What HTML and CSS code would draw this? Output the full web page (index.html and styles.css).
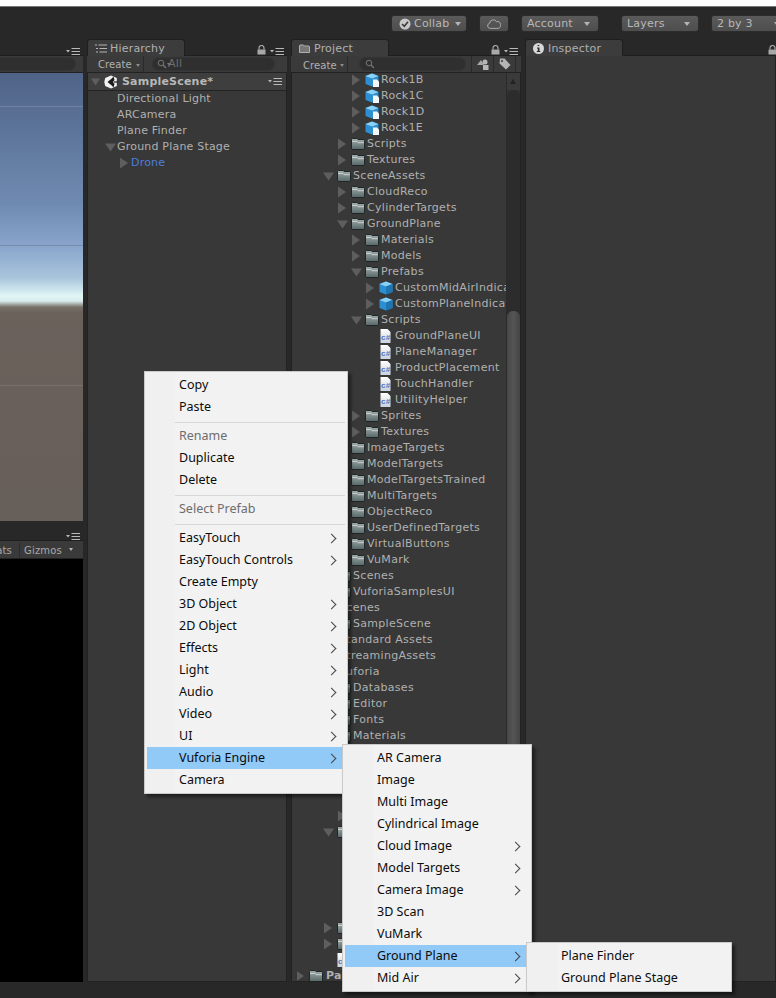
FILE: index.html
```html
<!DOCTYPE html>
<html lang="en">
<head>
    <meta charset="UTF-8">
    <meta name="viewport" content="width=device-width, initial-scale=1.0">
    <title>Unity - SampleScene</title>
    <link rel="stylesheet" href="styles.css">
</head>
<body>
    <svg class="defs" width="0" height="0">
        <defs>
            <linearGradient id="folderFill" x1="0" y1="0" x2="0" y2="1">
                <stop offset="0" stop-color="#a4aeae"/>
                <stop offset="1" stop-color="#566767"/>
            </linearGradient>
            <linearGradient id="docFill" x1="0" y1="0" x2="0" y2="1">
                <stop offset="0" stop-color="#ffffff"/>
                <stop offset="1" stop-color="#c9d3dc"/>
            </linearGradient>
            <symbol id="arrow-right" viewBox="0 0 8 12"><path d="M0 0.5 8 6 0 11.5z" fill="#5e5e5e"/></symbol>
            <symbol id="arrow-down" viewBox="0 0 11 9"><path d="M0 0.5H11L5.5 8.5z" fill="#5e5e5e"/></symbol>
            <symbol id="folder" viewBox="0 0 14 12">
                <path d="M0.5 3V1.5L1.5 0.5H6L7 1.5H13L13.5 2.5V11L13 11.5H1L0.5 11z" fill="url(#folderFill)" stroke="#1f2626"/>
                <path d="M1 3.500H6L7 4.700H13" fill="none" stroke="#c8d0d0"/>
            </symbol>
            <symbol id="cube" viewBox="0 0 14 14">
                <path d="M7 0.5 13.5 3V11L7 13.5 0.5 11V3z" fill="#2b8fd0"/>
                <path d="M7 0.5 13.5 3 7 5.5 0.5 3z" fill="#8ad2f5"/>
                <path d="M7 5.5 13.5 3V11L7 13.5z" fill="#1f74b3"/>
            </symbol>
            <symbol id="model" viewBox="0 0 14 14">
                <path d="M7 0.5 13.5 3V11L7 13.5 0.5 11V3z" fill="#2b8fd0"/>
                <path d="M7 0.5 13.5 3 7 5.5 0.5 3z" fill="#8ad2f5"/>
                <path d="M8 6.5H12L14 8.5V14H8z" fill="#f4f6f8"/>
            </symbol>
            <symbol id="script" viewBox="0 0 11 14">
                <path d="M0.5 0H7.5L10.5 3V14H0.5z" fill="url(#docFill)"/>
                <text x="1" y="10.5" font-family="Liberation Sans, sans-serif" font-size="8" font-weight="700" fill="#4a76c4">c#</text>
            </symbol>
            <symbol id="lock" viewBox="0 0 9 10">
                <path d="M2 4.500V3A2.500 2.500 0 0 1 7 3V4.500" fill="none" stroke="#a8a8a8" stroke-width="1.200"/>
                <rect x="0.5" y="4.500" width="8" height="5" fill="#a8a8a8"/>
            </symbol>
            <symbol id="panel-menu" viewBox="0 0 14 7">
                <path d="M0 2H4L2 4.500z" fill="#b8b8b8"/>
                <path d="M5.500 0.500H14M5.500 3.500H14M5.500 6.500H14" stroke="#b8b8b8"/>
            </symbol>
            <symbol id="mag" viewBox="0 0 10 10">
                <circle cx="4" cy="4" r="2.800" fill="none" stroke="#777"/>
                <path d="M6 6 9 9" stroke="#777" stroke-width="1.300"/>
            </symbol>
        </defs>
    </svg>

    <div class="page-strip"></div>

    <div class="toolbar">
        <div class="tool-btn collab">
            <svg width="12" height="12" viewBox="0 0 12 12"><circle cx="6" cy="6" r="5.500" fill="#c8c8c8"/><path d="M3 6 5.300 8.300 9 3.800" fill="none" stroke="#3a3a3a" stroke-width="1.600"/></svg>
            <span>Collab</span><i class="caret"></i>
        </div>
        <div class="tool-btn cloud">
            <svg width="14" height="10" viewBox="0 0 16 11"><path d="M3.500 10.500A3 3 0 0 1 3 4.600 4.200 4.200 0 0 1 10.800 2.800 3.900 3.900 0 0 1 12.500 10.500z" fill="none" stroke="#b8b8b8"/></svg>
        </div>
        <div class="tool-btn wide account"><span>Account</span><i class="caret"></i></div>
        <div class="tool-btn wide layers"><span>Layers</span><i class="caret"></i></div>
        <div class="tool-btn wide layout"><span>2 by 3</span><i class="caret"></i></div>
    </div>

    <div class="panels">
        <!-- scene + game -->
        <div class="panel-col scene-col">
            <div class="tab-strip">
                <svg class="strip-menu" width="14" height="7"><use href="#panel-menu"/></svg>
            </div>
            <div class="panel-bar"><div class="search scene-search"></div></div>
            <div class="viewport"></div>
            <div class="tab-strip game-strip">
                <svg class="strip-menu" width="14" height="7"><use href="#panel-menu"/></svg>
            </div>
            <div class="game-bar">
                <span class="game-stats">Stats</span>
                <span class="game-gizmos">Gizmos</span>
                <i class="caret"></i>
            </div>
            <div class="game-view"></div>
        </div>

        <!-- hierarchy -->
        <div class="panel-col hierarchy-col">
            <div class="tab-strip">
                <div class="tab">
                    <svg width="12" height="9" viewBox="0 0 12 9"><path d="M0 1H2M3.500 1H12M1 4.500H3M4.500 4.500H12M1 8H3M4.500 8H12" stroke="#b4b4b4"/></svg>
                    <span>Hierarchy</span>
                </div>
                <svg class="strip-lock" width="9" height="10"><use href="#lock"/></svg>
                <svg class="strip-menu" width="14" height="7"><use href="#panel-menu"/></svg>
            </div>
            <div class="panel-bar">
                <div class="create-btn"><span>Create</span><i class="caret"></i></div>
                <div class="search hierarchy-search">
                    <svg width="10" height="10"><use href="#mag"/></svg><i class="caret dim"></i>
                    <span>All</span>
                </div>
            </div>
            <div class="panel-body">
                <div class="scene-head">
                    <svg class="arrow" width="9" height="8" viewBox="0 0 11 9" preserveAspectRatio="none"><use href="#arrow-down"/></svg>
                    <svg class="unity-logo" width="14" height="14" viewBox="0 0 14 14">
                        <path d="M7 0.500 12.800 3V11L7 13.500 1.200 11 0.300 7 1.200 3z" fill="#f2f2f2"/>
                        <path d="M3.500 7 8 3.200 9.500 1.500 10.500 5 9 7 10.500 9 9.500 12.500 8 10.800z" fill="#1c1c1c"/>
                        <path d="M10 6.400H13.800V7.600H10z" fill="#1c1c1c"/>
                    </svg>
                    <span>SampleScene*</span>
                    <svg class="head-menu" width="14" height="7"><use href="#panel-menu"/></svg>
                </div>
                <div class="row h1"><span>Directional Light</span></div>
                <div class="row h1"><span>ARCamera</span></div>
                <div class="row h1"><span>Plane Finder</span></div>
                <div class="row h0">
                    <svg class="arrow" width="11" height="9"><use href="#arrow-down"/></svg>
                    <span>Ground Plane Stage</span>
                </div>
                <div class="row h2 prefab">
                    <svg class="arrow" width="8" height="12"><use href="#arrow-right"/></svg>
                    <span>Drone</span>
                </div>
            </div>
        </div>

        <!-- project -->
        <div class="panel-col project-col">
            <div class="tab-strip">
                <div class="tab">
                    <svg class="tab-ico" width="11" height="9" viewBox="0 0 11 9"><path d="M0.500 8.500V1.500L1 1H4.500L5.500 2H10L10.500 2.500V8.500z" fill="#777" stroke="#b0b0b0"/></svg>
                    <span>Project</span>
                </div>
                <svg class="strip-lock" width="9" height="10"><use href="#lock"/></svg>
                <svg class="strip-menu" width="14" height="7"><use href="#panel-menu"/></svg>
            </div>
            <div class="panel-bar">
                <div class="create-btn"><span>Create</span><i class="caret"></i></div>
                <div class="search project-search">
                    <svg width="10" height="10"><use href="#mag"/></svg>
                </div>
                <div class="filter-btn">
                    <svg width="12" height="11" viewBox="0 0 12 11"><path d="M4 1 7 6H0z" fill="#a8a8a8"/><circle cx="8" cy="3" r="2.500" fill="#b8b8b8"/><rect x="6" y="6" width="5.500" height="5" fill="#b8b8b8"/></svg>
                </div>
                <div class="filter-btn">
                    <svg width="12" height="12" viewBox="0 0 12 12"><path d="M1 0.500H5.500L11.500 7 7 11.500 0.500 5.500z" fill="#b4b4b4"/><circle cx="3" cy="3" r="1" fill="#3a3a3a"/></svg>
                </div>
            </div>
            <div class="project-body">
                <div class="tree">
                    <div class="row lv4"><svg class="arrow" width="8" height="12"><use href="#arrow-right"/></svg><svg class="ico" width="14" height="14"><use href="#model"/></svg><span>Rock1B</span></div>
                    <div class="row lv4"><svg class="arrow" width="8" height="12"><use href="#arrow-right"/></svg><svg class="ico" width="14" height="14"><use href="#model"/></svg><span>Rock1C</span></div>
                    <div class="row lv4"><svg class="arrow" width="8" height="12"><use href="#arrow-right"/></svg><svg class="ico" width="14" height="14"><use href="#model"/></svg><span>Rock1D</span></div>
                    <div class="row lv4"><svg class="arrow" width="8" height="12"><use href="#arrow-right"/></svg><svg class="ico" width="14" height="14"><use href="#model"/></svg><span>Rock1E</span></div>
                    <div class="row lv3"><svg class="arrow" width="8" height="12"><use href="#arrow-right"/></svg><svg class="ico" width="14" height="12"><use href="#folder"/></svg><span>Scripts</span></div>
                    <div class="row lv3"><svg class="arrow" width="8" height="12"><use href="#arrow-right"/></svg><svg class="ico" width="14" height="12"><use href="#folder"/></svg><span>Textures</span></div>
                    <div class="row lv2"><svg class="arrow open" width="11" height="9"><use href="#arrow-down"/></svg><svg class="ico" width="14" height="12"><use href="#folder"/></svg><span>SceneAssets</span></div>
                    <div class="row lv3"><svg class="arrow" width="8" height="12"><use href="#arrow-right"/></svg><svg class="ico" width="14" height="12"><use href="#folder"/></svg><span>CloudReco</span></div>
                    <div class="row lv3"><svg class="arrow" width="8" height="12"><use href="#arrow-right"/></svg><svg class="ico" width="14" height="12"><use href="#folder"/></svg><span>CylinderTargets</span></div>
                    <div class="row lv3"><svg class="arrow open" width="11" height="9"><use href="#arrow-down"/></svg><svg class="ico" width="14" height="12"><use href="#folder"/></svg><span>GroundPlane</span></div>
                    <div class="row lv4"><svg class="arrow" width="8" height="12"><use href="#arrow-right"/></svg><svg class="ico" width="14" height="12"><use href="#folder"/></svg><span>Materials</span></div>
                    <div class="row lv4"><svg class="arrow" width="8" height="12"><use href="#arrow-right"/></svg><svg class="ico" width="14" height="12"><use href="#folder"/></svg><span>Models</span></div>
                    <div class="row lv4"><svg class="arrow open" width="11" height="9"><use href="#arrow-down"/></svg><svg class="ico" width="14" height="12"><use href="#folder"/></svg><span>Prefabs</span></div>
                    <div class="row lv5"><svg class="arrow" width="8" height="12"><use href="#arrow-right"/></svg><svg class="ico" width="14" height="14"><use href="#cube"/></svg><span>CustomMidAirIndicator</span></div>
                    <div class="row lv5"><svg class="arrow" width="8" height="12"><use href="#arrow-right"/></svg><svg class="ico" width="14" height="14"><use href="#cube"/></svg><span>CustomPlaneIndicator</span></div>
                    <div class="row lv4"><svg class="arrow open" width="11" height="9"><use href="#arrow-down"/></svg><svg class="ico" width="14" height="12"><use href="#folder"/></svg><span>Scripts</span></div>
                    <div class="row leaf"><svg class="ico" width="11" height="14"><use href="#script"/></svg><span>GroundPlaneUI</span></div>
                    <div class="row leaf"><svg class="ico" width="11" height="14"><use href="#script"/></svg><span>PlaneManager</span></div>
                    <div class="row leaf"><svg class="ico" width="11" height="14"><use href="#script"/></svg><span>ProductPlacement</span></div>
                    <div class="row leaf"><svg class="ico" width="11" height="14"><use href="#script"/></svg><span>TouchHandler</span></div>
                    <div class="row leaf"><svg class="ico" width="11" height="14"><use href="#script"/></svg><span>UtilityHelper</span></div>
                    <div class="row lv4"><svg class="arrow" width="8" height="12"><use href="#arrow-right"/></svg><svg class="ico" width="14" height="12"><use href="#folder"/></svg><span>Sprites</span></div>
                    <div class="row lv4"><svg class="arrow" width="8" height="12"><use href="#arrow-right"/></svg><svg class="ico" width="14" height="12"><use href="#folder"/></svg><span>Textures</span></div>
                    <div class="row lv3"><svg class="arrow" width="8" height="12"><use href="#arrow-right"/></svg><svg class="ico" width="14" height="12"><use href="#folder"/></svg><span>ImageTargets</span></div>
                    <div class="row lv3"><svg class="arrow" width="8" height="12"><use href="#arrow-right"/></svg><svg class="ico" width="14" height="12"><use href="#folder"/></svg><span>ModelTargets</span></div>
                    <div class="row lv3"><svg class="arrow" width="8" height="12"><use href="#arrow-right"/></svg><svg class="ico" width="14" height="12"><use href="#folder"/></svg><span>ModelTargetsTrained</span></div>
                    <div class="row lv3"><svg class="arrow" width="8" height="12"><use href="#arrow-right"/></svg><svg class="ico" width="14" height="12"><use href="#folder"/></svg><span>MultiTargets</span></div>
                    <div class="row lv3"><svg class="arrow" width="8" height="12"><use href="#arrow-right"/></svg><svg class="ico" width="14" height="12"><use href="#folder"/></svg><span>ObjectReco</span></div>
                    <div class="row lv3"><svg class="arrow" width="8" height="12"><use href="#arrow-right"/></svg><svg class="ico" width="14" height="12"><use href="#folder"/></svg><span>UserDefinedTargets</span></div>
                    <div class="row lv3"><svg class="arrow" width="8" height="12"><use href="#arrow-right"/></svg><svg class="ico" width="14" height="12"><use href="#folder"/></svg><span>VirtualButtons</span></div>
                    <div class="row lv3"><svg class="arrow" width="8" height="12"><use href="#arrow-right"/></svg><svg class="ico" width="14" height="12"><use href="#folder"/></svg><span>VuMark</span></div>
                    <div class="row lv2"><svg class="arrow" width="8" height="12"><use href="#arrow-right"/></svg><svg class="ico" width="14" height="12"><use href="#folder"/></svg><span>Scenes</span></div>
                    <div class="row lv2"><svg class="arrow" width="8" height="12"><use href="#arrow-right"/></svg><svg class="ico" width="14" height="12"><use href="#folder"/></svg><span>VuforiaSamplesUI</span></div>
                    <div class="row lv1"><svg class="arrow open" width="11" height="9"><use href="#arrow-down"/></svg><svg class="ico" width="14" height="12"><use href="#folder"/></svg><span>Scenes</span></div>
                    <div class="row lv2"><svg class="arrow" width="8" height="12"><use href="#arrow-right"/></svg><svg class="ico" width="14" height="12"><use href="#folder"/></svg><span>SampleScene</span></div>
                    <div class="row lv1"><svg class="arrow" width="8" height="12"><use href="#arrow-right"/></svg><svg class="ico" width="14" height="12"><use href="#folder"/></svg><span>Standard Assets</span></div>
                    <div class="row lv1"><svg class="arrow" width="8" height="12"><use href="#arrow-right"/></svg><svg class="ico" width="14" height="12"><use href="#folder"/></svg><span>StreamingAssets</span></div>
                    <div class="row lv1"><svg class="arrow open" width="11" height="9"><use href="#arrow-down"/></svg><svg class="ico" width="14" height="12"><use href="#folder"/></svg><span>Vuforia</span></div>
                    <div class="row lv2"><svg class="arrow" width="8" height="12"><use href="#arrow-right"/></svg><svg class="ico" width="14" height="12"><use href="#folder"/></svg><span>Databases</span></div>
                    <div class="row lv2"><svg class="arrow" width="8" height="12"><use href="#arrow-right"/></svg><svg class="ico" width="14" height="12"><use href="#folder"/></svg><span>Editor</span></div>
                    <div class="row lv2"><svg class="arrow" width="8" height="12"><use href="#arrow-right"/></svg><svg class="ico" width="14" height="12"><use href="#folder"/></svg><span>Fonts</span></div>
                    <div class="row lv2"><svg class="arrow" width="8" height="12"><use href="#arrow-right"/></svg><svg class="ico" width="14" height="12"><use href="#folder"/></svg><span>Materials</span></div>
                    <!-- rows behind the context menus, names not visible -->
                    <div class="row-gap four"></div>
                    <div class="row lv3"><svg class="arrow" width="8" height="12"><use href="#arrow-right"/></svg><svg class="ico" width="14" height="12"><use href="#folder"/></svg></div>
                    <div class="row lv2"><svg class="arrow open" width="11" height="9"><use href="#arrow-down"/></svg><svg class="ico" width="14" height="12"><use href="#folder"/></svg></div>
                    <div class="row-gap five"></div>
                    <div class="row lv2"><svg class="arrow" width="8" height="12"><use href="#arrow-right"/></svg><svg class="ico" width="14" height="12"><use href="#folder"/></svg></div>
                    <div class="row lv2"><svg class="arrow" width="8" height="12"><use href="#arrow-right"/></svg><svg class="ico" width="14" height="12"><use href="#folder"/></svg></div>
                    <div class="row leaf-doc"><svg class="ico" width="11" height="14"><use href="#script"/></svg></div>
                    <div class="row lv0 root"><svg class="arrow" width="8" height="12"><use href="#arrow-right"/></svg><svg class="ico" width="14" height="12"><use href="#folder"/></svg><span>Packages</span></div>
                </div>
                <div class="scrollbar">
                    <div class="scroll-up"></div>
                    <div class="scroll-track"><div class="scroll-thumb"></div></div>
                </div>
            </div>
        </div>

        <!-- inspector -->
        <div class="panel-col inspector-col">
            <div class="tab-strip">
                <div class="tab">
                    <svg class="tab-ico" width="11" height="11" viewBox="0 0 11 11"><circle cx="5.500" cy="5.500" r="5.500" fill="#d8d8d8"/><path d="M4.300 3H6.300V2H4.800zM4 4.500H6.500V8H7.300V9H3.800V8H4.800V5.500H4z" fill="#2b2b2b"/></svg>
                    <span>Inspector</span>
                </div>
                <svg class="strip-lock" width="9" height="10"><use href="#lock"/></svg>
            </div>
            <div class="panel-body"></div>
        </div>
    </div>

    <div class="status-bar"></div>

    <!-- context menus -->
    <div class="menu menu-main">
        <div class="menu-item"><span>Copy</span></div>
        <div class="menu-item"><span>Paste</span></div>
        <div class="menu-sep"></div>
        <div class="menu-item disabled"><span>Rename</span></div>
        <div class="menu-item"><span>Duplicate</span></div>
        <div class="menu-item"><span>Delete</span></div>
        <div class="menu-sep"></div>
        <div class="menu-item disabled"><span>Select Prefab</span></div>
        <div class="menu-sep"></div>
        <div class="menu-item sub"><span>EasyTouch</span></div>
        <div class="menu-item sub"><span>EasyTouch Controls</span></div>
        <div class="menu-item"><span>Create Empty</span></div>
        <div class="menu-item sub"><span>3D Object</span></div>
        <div class="menu-item sub"><span>2D Object</span></div>
        <div class="menu-item sub"><span>Effects</span></div>
        <div class="menu-item sub"><span>Light</span></div>
        <div class="menu-item sub"><span>Audio</span></div>
        <div class="menu-item sub"><span>Video</span></div>
        <div class="menu-item sub"><span>UI</span></div>
        <div class="menu-item sub active"><span>Vuforia Engine</span></div>
        <div class="menu-item"><span>Camera</span></div>
    </div>

    <div class="menu menu-vuforia">
        <div class="menu-item"><span>AR Camera</span></div>
        <div class="menu-item"><span>Image</span></div>
        <div class="menu-item"><span>Multi Image</span></div>
        <div class="menu-item"><span>Cylindrical Image</span></div>
        <div class="menu-item sub"><span>Cloud Image</span></div>
        <div class="menu-item sub"><span>Model Targets</span></div>
        <div class="menu-item sub"><span>Camera Image</span></div>
        <div class="menu-item"><span>3D Scan</span></div>
        <div class="menu-item"><span>VuMark</span></div>
        <div class="menu-item sub active"><span>Ground Plane</span></div>
        <div class="menu-item sub"><span>Mid Air</span></div>
    </div>

    <div class="menu menu-ground">
        <div class="menu-item"><span>Plane Finder</span></div>
        <div class="menu-item"><span>Ground Plane Stage</span></div>
    </div>
</body>
</html>
```

FILE: styles.css
```css
* {
    box-sizing: border-box;
}
html, body {
    margin: 0;
    padding: 0;
    height: 998px;
    overflow: hidden;
}
body {
    position: relative;
    display: flex;
    flex-direction: column;
    background: #282828;
    color: #b0b0b0;
    font-family: "DejaVu Sans", sans-serif;
    font-size: 11px;
    line-height: 16px;
    letter-spacing: 0.2px;
}
.defs {
    position: absolute;
}
.page-strip {
    height: 7px;
    flex: none;
    background: #fff;
    border-bottom: 1px solid #777;
}

/* top toolbar */
.toolbar {
    height: 32px;
    flex: none;
    display: flex;
    align-items: flex-start;
    padding-top: 8px;
    overflow: hidden;
}
.tool-btn {
    height: 17px;
    display: flex;
    align-items: center;
    flex: none;
    padding: 0 5px;
    background: linear-gradient(#5a5a5a, #4e4e4e);
    border: 1px solid #2c2c2c;
    border-radius: 3px;
    color: #b8b8b8;
}
.tool-btn svg {
    flex: none;
}
.collab {
    width: 76px;
    margin-left: 391px;
    padding: 0 0 0 7px;
    gap: 3px;
}
.collab .caret {
    margin-left: 3px;
}
.cloud {
    width: 30px;
    margin-left: 12px;
    justify-content: center;
}
.wide {
    width: 78px;
    justify-content: space-between;
    padding-right: 8px;
}
.account {
    margin-left: 12px;
}
.layers {
    margin-left: 22px;
}
.layout {
    margin-left: 12px;
}
.caret {
    display: block;
    width: 0;
    height: 0;
    border-left: 3px solid transparent;
    border-right: 3px solid transparent;
    border-top: 4px solid #b4b4b4;
}
.caret.dim {
    border-top-color: #777;
    border-left-width: 2px;
    border-right-width: 2px;
    border-top-width: 3px;
    margin-right: -3px;
}

/* panels */
.panels {
    flex: 1;
    min-height: 0;
    display: grid;
    grid-template-columns: 83px 200px 230px 1fr;
    column-gap: 4px;
}
.panel-col {
    display: flex;
    flex-direction: column;
    min-width: 0;
    overflow: hidden;
}
.tab-strip {
    position: relative;
    height: 17px;
    flex: none;
    background: #282828;
    border-bottom: 1px solid #1e1e1e;
}
.tab {
    width: 98px;
    height: 17px;
    display: flex;
    align-items: center;
    gap: 3px;
    padding: 1px 0 0 7px;
    background: #3c3c3c;
    border: 1px solid #1f1f1f;
    border-bottom: 0;
    border-radius: 3px 3px 0 0;
    color: #b0b0b0;
}
.tab-ico {
    margin-right: 1px;
}
.strip-lock {
    position: absolute;
    right: 21px;
    top: 6px;
}
.strip-menu {
    position: absolute;
    right: 3px;
    top: 9px;
}
.inspector-col .strip-lock {
    right: -1px;
}
.panel-bar {
    height: 17px;
    flex: none;
    display: flex;
    align-items: center;
    background: #3a3a3a;
    border-bottom: 1px solid #222;
    font-size: 10px;
}
.panel-body {
    flex: 1;
    background: #383838;
    border: 1px solid #222;
    border-top: 0;
}
.create-btn {
    width: 57px;
    height: 16px;
    display: flex;
    flex: none;
    align-items: center;
    justify-content: space-between;
    padding: 2px 3px 0 11px;
    border-right: 1px solid #2a2a2a;
    letter-spacing: 0.1px;
}
.project-col .create-btn {
    padding-left: 12px;
    padding-top: 3px;
}
.create-btn .caret {
    border-left-width: 2px;
    border-right-width: 2px;
    border-top-width: 3px;
    border-top-color: #8a8a8a;
}
.search {
    height: 14px;
    display: flex;
    align-items: center;
    background: #2f2f2f;
    border: 1px solid #353535;
    border-radius: 7px;
    color: #6e6e6e;
    font-size: 11px;
}
.scene-search {
    width: 90px;
    margin-left: -14px;
}
.hierarchy-search {
    width: 123px;
    margin-left: 8px;
    padding-left: 4px;
}
.project-search {
    width: 107px;
    margin-left: 11px;
    padding-left: 5px;
}
.filter-btn {
    width: 22px;
    height: 16px;
    flex: none;
    display: flex;
    align-items: center;
    justify-content: center;
    border-right: 1px solid #2a2a2a;
}
.project-search + .filter-btn {
    margin-left: 5px;
    border-left: 1px solid #2a2a2a;
    width: 23px;
}

/* scene and game view */
.scene-col {
    background: #282828;
}
.viewport {
    height: 448px;
    flex: none;
    background:
        linear-gradient(rgba(255,255,255,0.14), rgba(255,255,255,0.14)) 0 33px / 100% 1px no-repeat,
        linear-gradient(rgba(60,70,90,0.25), rgba(60,70,90,0.25)) 0 172px / 100% 1px no-repeat,
        linear-gradient(rgba(255,255,255,0.1), rgba(255,255,255,0.1)) 0 312px / 100% 1px no-repeat,
        linear-gradient(#4f6387 0, #6f8ab1 130px, #88a4cb 172px, #a9c5dc 205px, #e0f6f6 223px, #d8ecec 228px, #78716a 234px, #69615a 240px, #675f59 448px);
}
.game-strip {
    height: 20px;
}
.game-strip .strip-menu {
    top: 12px;
}
.game-bar {
    height: 18px;
    flex: none;
    display: flex;
    align-items: center;
    position: relative;
    background: #3a3a3a;
    border-bottom: 1px solid #222;
    font-size: 10px;
    color: #a8a8a8;
    overflow: hidden;
}
.game-stats {
    position: absolute;
    right: 63px;
    top: 2px;
    padding-right: 7px;
    border-right: 1px solid #2c2c2c;
}
.game-gizmos {
    position: absolute;
    right: 21px;
    top: 2px;
    padding-right: 0;
}
.game-bar .caret {
    position: absolute;
    right: 10px;
    border-left-width: 2px;
    border-right-width: 2px;
    border-top-width: 3px;
}
.game-view {
    flex: 1;
    background: #000;
}

/* hierarchy */
.scene-head {
    position: relative;
    height: 18px;
    display: flex;
    align-items: center;
    padding-left: 3px;
    background: #3e3e3e;
    border-bottom: 1px solid #222;
    font-weight: 700;
    color: #b8b8b8;
}
.scene-head .arrow {
    margin-right: 4px;
}
.scene-head .unity-logo {
    margin-right: 4px;
    flex: none;
}
.head-menu {
    position: absolute;
    right: 4px;
    top: 5px;
}
.row {
    height: 16px;
    display: flex;
    align-items: center;
    white-space: nowrap;
}
.row.h1 {
    padding-left: 29px;
}
.row.h0 {
    padding-left: 17px;
}
.row.h0 .arrow {
    margin-right: 1px;
}
.row.h2 {
    padding-left: 32px;
}
.row.h2 .arrow {
    margin-right: 3px;
}
.prefab {
    color: #4d7fd9;
}

/* project tree */
.project-body {
    flex: 1;
    min-height: 0;
    display: flex;
    background: #383838;
    border: 1px solid #222;
    border-top: 0;
}
.tree {
    flex: 1;
    min-width: 0;
    overflow: hidden;
    margin-top: -1px;
    letter-spacing: 0.3px;
}
.tree .arrow {
    width: 13px;
    flex: none;
    padding-right: 5px;
}
.tree .arrow.open {
    margin-left: -1px;
    width: 14px;
    padding-right: 3px;
}
.tree .ico {
    flex: none;
    margin-right: 2px;
}
.lv0 { padding-left: 4px; }
.lv1 { padding-left: 18px; }
.lv2 { padding-left: 32px; }
.lv3 { padding-left: 46px; }
.lv4 { padding-left: 60px; }
.lv5 { padding-left: 74px; }
.leaf {
    padding-left: 88px;
}
.tree .leaf .ico {
    margin-right: 4px;
}
.leaf-doc {
    padding-left: 45px;
}
.row-gap.four {
    height: 64px;
}
.row-gap.five {
    height: 80px;
}
.root {
    font-weight: 700;
}
.tree .root .arrow {
    margin-left: 1px;
    width: 12px;
}
.tree .root .ico {
    margin-right: 3px;
}

/* scrollbar */
.scrollbar {
    width: 14px;
    flex: none;
    display: flex;
    flex-direction: column;
    background: #333;
    border-left: 1px solid #2a2a2a;
}
.scroll-up {
    height: 17px;
    flex: none;
    background: #3a3a3a;
    position: relative;
}
.scroll-up::after {
    content: "";
    position: absolute;
    left: 3px;
    top: 6px;
    border-left: 3px solid transparent;
    border-right: 3px solid transparent;
    border-bottom: 5px solid #222;
}
.scroll-track {
    flex: 1;
    background: #2c2c2c;
    border-radius: 6px 6px 0 0;
    padding-top: 221px;
}
.scroll-thumb {
    height: 460px;
    background: linear-gradient(90deg, #484848, #555 50%, #444);
    border-radius: 6px;
}

/* context menus */
.menu {
    position: absolute;
    padding: 2px;
    background: linear-gradient(90deg, #f0f0f0 30px, #f2f2f2 30px);
    border: 1px solid #c9c9c9;
    box-shadow: 3px 3px 3px rgba(0, 0, 0, 0.45);
    color: #0c0c0c;
    font-family: "Noto Sans", sans-serif;
    font-size: 12.5px;
    letter-spacing: 0;
    line-height: 21px;
}
.menu-main {
    left: 144px;
    top: 371px;
    width: 204px;
    height: 423px;
}
.menu-vuforia {
    left: 342px;
    top: 744px;
    width: 190px;
    height: 248px;
}
.menu-ground {
    left: 526px;
    top: 942px;
    width: 206px;
    height: 50px;
}
.menu-item {
    position: relative;
    height: 22px;
    padding-left: 32px;
    white-space: nowrap;
}
.menu-item.disabled {
    color: #6d6d6d;
}
.menu-item.active {
    background: #91c9f7;
}
.menu-item.sub::after {
    content: "";
    position: absolute;
    right: 10px;
    top: 8px;
    width: 6px;
    height: 6px;
    border-top: 1px solid #444;
    border-right: 1px solid #444;
    transform: rotate(45deg);
}
.menu-sep {
    height: 7px;
    margin-left: 28px;
    padding-top: 4px;
}
.menu-sep::before {
    content: "";
    display: block;
    height: 1px;
    background: #d7d7d7;
}
.status-bar {
    height: 16px;
    flex: none;
    background: #282828;
}
```
